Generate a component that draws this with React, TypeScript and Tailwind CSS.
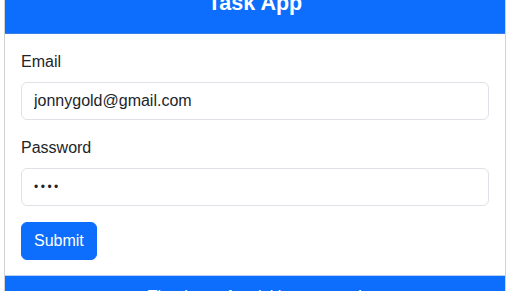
import React from "react";

export default function App() {
  return (
    <div className="min-h-screen bg-white font-['Liberation_Sans',Arial,sans-serif] text-[#212529]">
      <div className="ml-[4px] w-[502px] border border-t-0 border-[#d2d2d2] rounded-b-md">
        <div className="h-[34px] bg-[#0d6efd] border-b border-[#3a7fe6] flex items-end justify-center pb-[16px]">
          <h3 className="text-[21.5px] leading-[1.2] font-bold text-white">Task App</h3>
        </div>
        <form className="px-4 pt-4 pb-[15px]" onSubmit={(e) => e.preventDefault()}>
          <div className="mb-4">
            <label className="block text-base leading-6 mb-2">Email</label>
            <input
              type="email"
              defaultValue="jonnygold@gmail.com"
              className="block w-full h-[38px] px-3 border border-[#dee2e6] rounded-md text-base leading-6 text-[#212529] outline-none"
            />
          </div>
          <div className="mb-4">
            <label className="block text-base leading-6 mb-2">Password</label>
            <input
              type="password"
              defaultValue="abcd"
              className="block w-full h-[38px] px-3 border border-[#dee2e6] rounded-md text-[12px] leading-6 text-[#212529] outline-none tracking-[2.5px]"
            />
          </div>
          <button
            type="submit"
            className="h-[38px] px-3 bg-[#0d6efd] border border-[#0d6efd] rounded-md text-white text-base leading-6"
          >
            Submit
          </button>
        </form>
        <div className="bg-[#0d6efd] border-t border-[#b9d0f5] pt-[9px] pb-2 text-center text-white text-base leading-6">
          Thank you for visiting our app!
        </div>
      </div>
    </div>
  );
}
